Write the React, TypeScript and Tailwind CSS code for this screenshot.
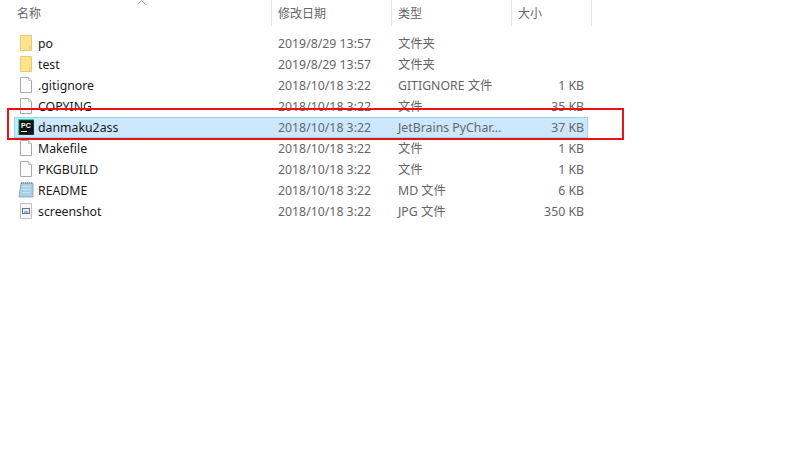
const FONT = "font-['Noto_Sans','Noto_Sans_CJK_SC',sans-serif]";

type Kind = "folder" | "file" | "pc" | "md" | "jpg";
type Row = { name: string; date: string; type: string; size: string; kind: Kind; selected?: boolean };

const rows: Row[] = [
  { name: "po", date: "2019/8/29 13:57", type: "文件夹", size: "", kind: "folder" },
  { name: "test", date: "2019/8/29 13:57", type: "文件夹", size: "", kind: "folder" },
  { name: ".gitignore", date: "2018/10/18 3:22", type: "GITIGNORE 文件", size: "1 KB", kind: "file" },
  { name: "COPYING", date: "2018/10/18 3:22", type: "文件", size: "35 KB", kind: "file" },
  { name: "danmaku2ass", date: "2018/10/18 3:22", type: "JetBrains PyChar...", size: "37 KB", kind: "pc", selected: true },
  { name: "Makefile", date: "2018/10/18 3:22", type: "文件", size: "1 KB", kind: "file" },
  { name: "PKGBUILD", date: "2018/10/18 3:22", type: "文件", size: "1 KB", kind: "file" },
  { name: "README", date: "2018/10/18 3:22", type: "MD 文件", size: "6 KB", kind: "md" },
  { name: "screenshot", date: "2018/10/18 3:22", type: "JPG 文件", size: "350 KB", kind: "jpg" },
];

function Icon({ kind }: { kind: Kind }) {
  if (kind === "folder")
    return (
      <svg width="16" height="16" viewBox="0 0 16 16" className="block">
        <path d="M2.5 0.5H13.5V15.5H2.5Z" fill="#ffe48f" stroke="#eccb6b" />
        <path d="M11.5 15.5V11.5H13.5" fill="none" stroke="#eccb6b" />
      </svg>
    );
  if (kind === "file")
    return (
      <svg width="16" height="16" viewBox="0 0 16 16" className="block">
        <path d="M2.5 0.5H10.5L13.5 3.5V15.5H2.5Z" fill="#fdfdfd" stroke="#a9a9a9" />
        <path d="M10.5 0.5V3.5H13.5" fill="#eeeeee" stroke="#c4c4c4" />
      </svg>
    );
  if (kind === "pc")
    return (
      <svg width="16" height="16" viewBox="0 0 16 16" className="block">
        <rect x="0" y="0" width="16" height="16" fill="#21d789" />
        <rect x="1" y="1" width="15" height="15" fill="#0c5f7a" />
        <rect x="1.5" y="1.5" width="14" height="14" fill="#111111" />
        <text x="3" y="8.5" fontSize="7" fontWeight="700" fill="#ffffff" fontFamily="Liberation Sans, sans-serif">PC</text>
        <rect x="3" y="12" width="6" height="1" fill="#ffffff" />
      </svg>
    );
  if (kind === "md")
    return (
      <svg width="16" height="16" viewBox="0 0 16 16" className="block">
        <path d="M3 1H15V15H1Z" fill="#a9cfe4" stroke="#7d9fb2" strokeWidth="0.8" />
        <path d="M3 1H15" stroke="#666666" strokeWidth="1.2" strokeDasharray="1 1" />
        <path d="M4 4.5H13M3.5 7.5H13M3 10.5H13" stroke="#c9e2ef" />
      </svg>
    );
  return (
    <svg width="16" height="16" viewBox="0 0 16 16" className="block">
      <path d="M2.5 0.5H13.5V15.5H2.5Z" fill="#f7f7f7" stroke="#c0c0c0" />
      <rect x="4.5" y="5.5" width="7" height="5" fill="#e9eef2" stroke="#5f7a90" />
      <path d="M6 9H10" stroke="#5f7a90" />
    </svg>
  );
}

export default function App() {
  return (
    <div className={`relative w-[785px] h-[461px] overflow-hidden bg-white text-[12px] text-[#666666] ${FONT}`}>
      <div className="flex h-[26px] pl-[14px]">
        <div className="w-[258px] pl-[3px] pt-[6px] leading-[16px] border-r border-[#e5e5e5]">名称</div>
        <div className="w-[120px] pl-[6px] pt-[6px] leading-[16px] border-r border-[#e5e5e5]">修改日期</div>
        <div className="w-[120px] pl-[6px] pt-[6px] leading-[16px] border-r border-[#e5e5e5]">类型</div>
        <div className="w-[80px] pl-[6px] pt-[6px] leading-[16px] border-r border-[#e5e5e5]">大小</div>
      </div>
      <div className="mt-[7px] flex flex-col text-[12.3px]">
        {rows.map((r) => (
          <div key={r.name} className="flex h-[21px] pl-[14px]">
            <div
              className={`flex w-[574px] items-center border pt-[2px] ${
                r.selected ? "border-[#99d1ff] bg-[#cce8ff]" : "border-transparent"
              }`}
            >
              <div className="w-[20px] shrink-0 pl-[3px] pb-[3px]">
                <Icon kind={r.kind} />
              </div>
              <div className="w-[243px] shrink-0 pl-[3px] text-[#1a1a1a] whitespace-nowrap">{r.name}</div>
              <div className="w-[120px] shrink-0 whitespace-nowrap">{r.date}</div>
              <div className="w-[112px] shrink-0 whitespace-nowrap">{r.type}</div>
              <div className="w-[74px] shrink-0 text-right whitespace-nowrap">{r.size}</div>
            </div>
          </div>
        ))}
      </div>
      <svg width="9" height="5" viewBox="0 0 9 5" className="absolute left-[137px] top-0">
        <path d="M0.5 4.5L4.5 0.5L8.5 4.5" fill="none" stroke="#a0a0a0" />
      </svg>
      <div className="absolute left-[7px] top-[108px] w-[617px] h-[32px] border-[2px] border-[#ee1111]" />
    </div>
  );
}
